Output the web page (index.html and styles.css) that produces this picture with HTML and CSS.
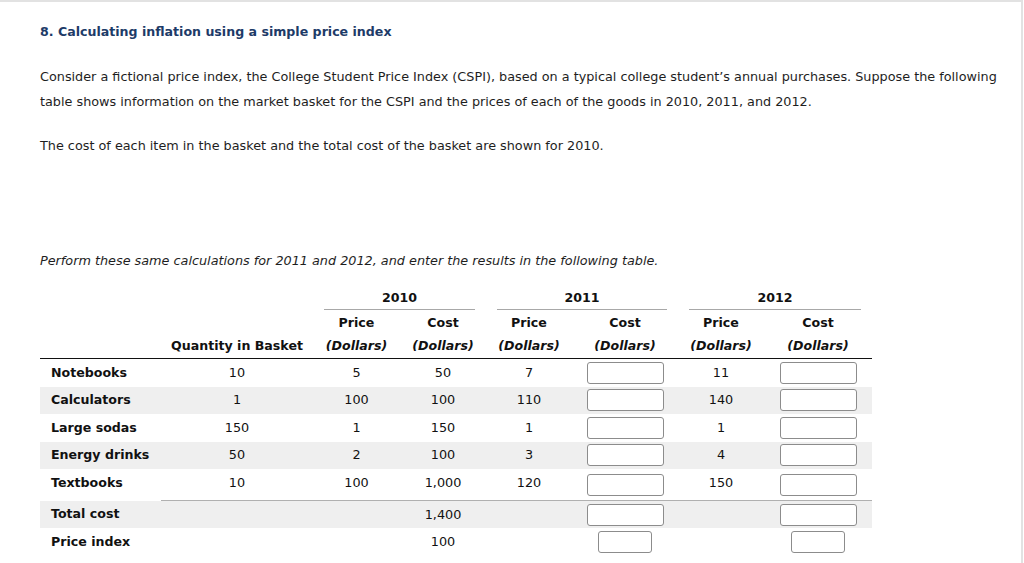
FILE: index.html
```html
<!DOCTYPE html>
<html lang="en">
<head>
<meta charset="utf-8">
<title>Calculating inflation using a simple price index</title>
<link rel="stylesheet" href="styles.css">
</head>
<body>
<div class="frame">
  <h1 class="title">8. Calculating inflation using a simple price index</h1>
  <p class="para">Consider a fictional price index, the College Student Price Index (CSPI), based on a typical college student’s annual purchases. Suppose the following table shows information on the market basket for the CSPI and the prices of each of the goods in 2010, 2011, and 2012.</p>
  <p class="para gap">The cost of each item in the basket and the total cost of the basket are shown for 2010.</p>
  <p class="para instr">Perform these same calculations for 2011 and 2012, and enter the results in the following table.</p>

  <table class="grid">
    <colgroup>
      <col class="c-label"><col class="c-qty"><col class="c-p10"><col class="c-c10"><col class="c-p11"><col class="c-c11"><col class="c-p12"><col class="c-c12">
    </colgroup>
    <thead>
      <tr class="h-year">
        <th></th><th></th>
        <th colspan="2"><div class="year">2010</div></th>
        <th colspan="2"><div class="year">2011</div></th>
        <th colspan="2"><div class="year">2012</div></th>
      </tr>
      <tr class="h-name">
        <th></th><th></th>
        <th>Price</th><th>Cost</th><th>Price</th><th>Cost</th><th>Price</th><th>Cost</th>
      </tr>
      <tr class="h-unit">
        <th></th><th class="qty-h">Quantity in Basket</th>
        <th><em>(Dollars)</em></th><th><em>(Dollars)</em></th><th><em>(Dollars)</em></th><th><em>(Dollars)</em></th><th><em>(Dollars)</em></th><th><em>(Dollars)</em></th>
      </tr>
    </thead>
    <tbody>
      <tr class="row">
        <th class="lbl">Notebooks</th><td>10</td><td>5</td><td>50</td><td>7</td><td><input class="box" type="text"></td><td>11</td><td><input class="box" type="text"></td>
      </tr>
      <tr class="row shade">
        <th class="lbl">Calculators</th><td>1</td><td>100</td><td>100</td><td>110</td><td><input class="box" type="text"></td><td>140</td><td><input class="box" type="text"></td>
      </tr>
      <tr class="row">
        <th class="lbl">Large sodas</th><td>150</td><td>1</td><td>150</td><td>1</td><td><input class="box" type="text"></td><td>1</td><td><input class="box" type="text"></td>
      </tr>
      <tr class="row shade">
        <th class="lbl">Energy drinks</th><td>50</td><td>2</td><td>100</td><td>3</td><td><input class="box" type="text"></td><td>4</td><td><input class="box" type="text"></td>
      </tr>
      <tr class="row last">
        <th class="lbl">Textbooks</th><td>10</td><td>100</td><td>1,000</td><td>120</td><td><input class="box" type="text"></td><td>150</td><td><input class="box" type="text"></td>
      </tr>
      <tr class="row shade total">
        <th class="lbl">Total cost</th><td></td><td></td><td>1,400</td><td></td><td><input class="box" type="text"></td><td></td><td><input class="box" type="text"></td>
      </tr>
      <tr class="row index">
        <th class="lbl">Price index</th><td></td><td></td><td>100</td><td></td><td><input class="box small" type="text"></td><td></td><td><input class="box small" type="text"></td>
      </tr>
    </tbody>
  </table>
</div>
</body>
</html>
```

FILE: styles.css
```css
html, body {
  margin: 0;
  padding: 0;
  background: #fff;
}

body {
  font-family: "DejaVu Sans", Verdana, sans-serif;
  font-size: 12.8px;
  color: #1e1e1e;
}

.frame {
  box-sizing: border-box;
  width: 1023px;
  min-height: 563px;
  border-top: 2px solid #e2e2e2;
  border-right: 2px solid #e2e2e2;
  padding: 20px 0 0 40px;
}

.title {
  margin: 0 0 22px;
  font-size: 12.6px;
  line-height: 20px;
  font-weight: bold;
  color: #1d3b68;
}

.para {
  margin: 0;
  width: 975px;
  line-height: 25px;
}

.gap {
  margin-top: 19px;
}

.instr {
  margin-top: 90px;
  font-style: italic;
}

.grid {
  margin-top: 13px;
  border-collapse: collapse;
  table-layout: fixed;
  width: 832px;
  color: #111;
}

.c-label { width: 121px; }
.c-qty { width: 152px; }
.c-p10 { width: 87px; }
.c-c10 { width: 86px; }
.c-p11 { width: 86px; }
.c-c11 { width: 106px; }
.c-p12 { width: 86px; }
.c-c12 { width: 108px; }

.grid th,
.grid td {
  padding: 0;
  text-align: center;
  vertical-align: middle;
  line-height: 18px;
}

.grid th {
  font-size: 12.6px;
}

.grid thead th {
  font-weight: bold;
}

.h-year th {
  height: 25px;
  vertical-align: top;
}

.year {
  margin: 3px 11px 0;
  padding-bottom: 2px;
  border-bottom: 1px solid #a8a8a8;
}

.h-name th {
  height: 23px;
}

.h-unit th {
  height: 24px;
  border-bottom: 1px solid #111;
}

.h-unit em {
  font-style: italic;
}

.qty-h {
  white-space: nowrap;
}

.row th,
.row td {
  height: 27.5px;
}

.row.shade th,
.row.shade td {
  background: #efefef;
}

.row.last th,
.row.last td {
  height: 26px;
  vertical-align: top;
  padding-top: 5px;
}

.row.total th,
.row.total td {
  height: 27px;
}

.row.total td {
  border-top: 1px solid #b0b0b0;
}

.row.index th,
.row.index td {
  height: 28px;
}

.grid .lbl {
  text-align: left;
  padding-left: 11px;
  font-weight: bold;
}

.box {
  display: block;
  margin: 0 auto;
  box-sizing: border-box;
  width: 77px;
  height: 22px;
  padding: 0;
  border: 1px solid #8c8c8c;
  border-radius: 3px;
  background: #fff;
}

.box.small {
  width: 54px;
}
```
